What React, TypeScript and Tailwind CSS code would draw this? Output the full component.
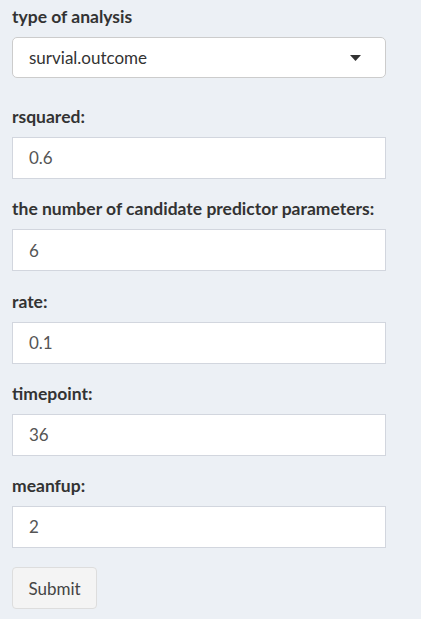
import React from "react";

const fields: { label: string; value: string }[] = [
  { label: "rsquared:", value: "0.6" },
  { label: "the number of candidate predictor parameters:", value: "6" },
  { label: "rate:", value: "0.1" },
  { label: "timepoint:", value: "36" },
  { label: "meanfup:", value: "2" },
];

export default function App() {
  return (
    <div
      className="min-h-screen w-[421px] bg-[#ecf0f5] pl-[12px] pt-[7px] text-[#333]"
      style={{ fontFamily: "Lato, 'Open Sans', sans-serif" }}
    >
      <div className="w-[374px]">
        <div className="mb-[29px]">
          <div className="mb-[10px] h-[20px] whitespace-nowrap text-[17.5px] font-bold leading-[20px]">type of analysis</div>
          <div className="flex h-[41px] items-center justify-between rounded-[5px] border border-[#ccc] bg-white pl-[16px] pr-[24px]">
            <span className="text-[17px] text-[#333]">survial.outcome</span>
            <svg width="11" height="6" viewBox="0 0 11 6">
              <path d="M0 0 L11 0 L5.5 6 Z" fill="#333" />
            </svg>
          </div>
        </div>
        {fields.map((f) => (
          <div key={f.label} className="mb-[20.25px]">
            <div className="mb-[10px] h-[20px] whitespace-nowrap text-[17.5px] font-bold leading-[20px]">{f.label}</div>
            <div className="flex h-[42px] items-center border border-[#d2d6de] bg-white pl-[16px]">
              <span className="text-[17px] text-[#555]">{f.value}</span>
            </div>
          </div>
        ))}
        <button className="mt-[-1px] flex h-[42px] w-[85px] items-center justify-center rounded-[4px] border border-[#ddd] bg-[#f4f4f4] text-[17px] text-[#444]">
          Submit
        </button>
      </div>
    </div>
  );
}
